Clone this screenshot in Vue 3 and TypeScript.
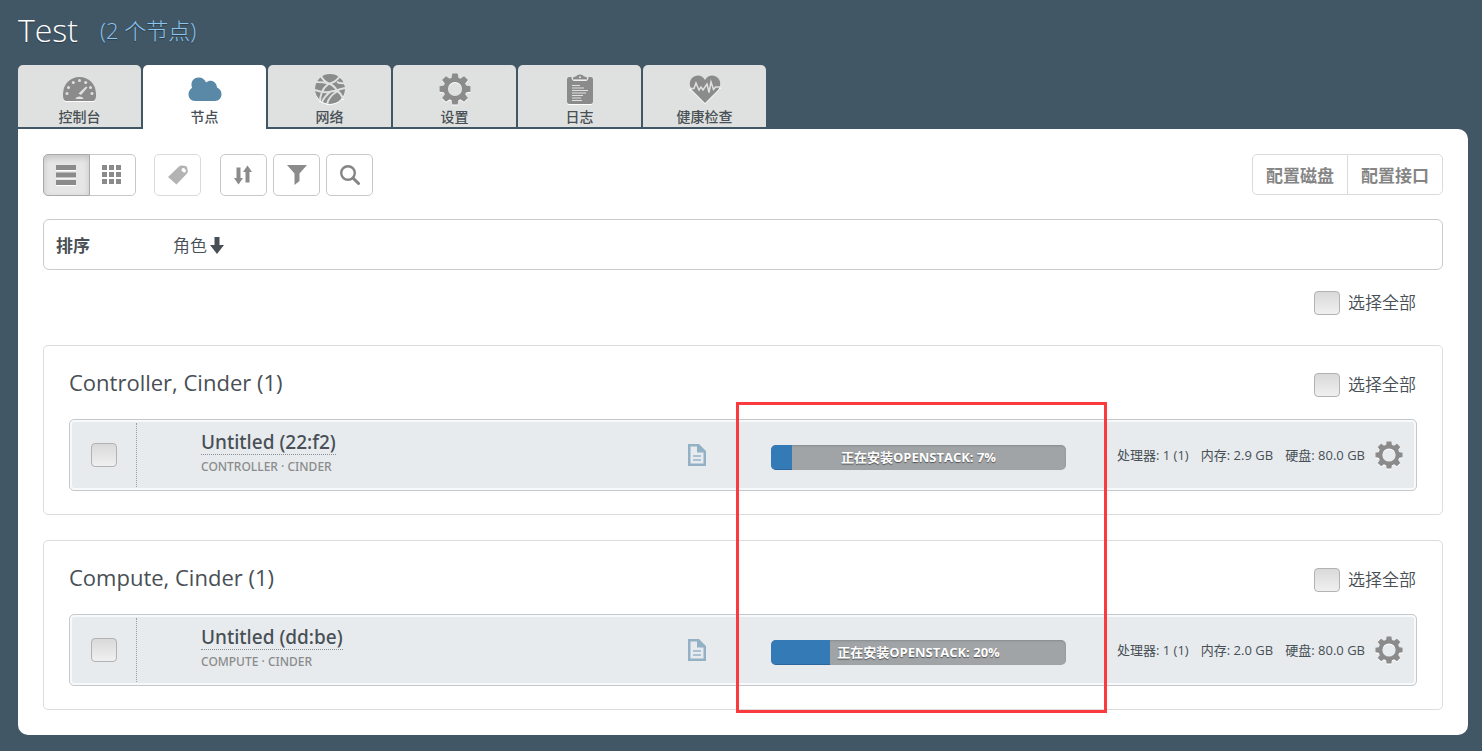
<script setup lang="ts">
import { ref } from 'vue'

interface Tab {
  id: string
  label: string
}

interface NodeItem {
  name: string
  roles: string
  progress: number
  ram: string
}

interface NodeGroup {
  title: string
  nodes: NodeItem[]
}

const tabs: Tab[] = [
  { id: 'dashboard', label: '控制台' },
  { id: 'nodes', label: '节点' },
  { id: 'network', label: '网络' },
  { id: 'settings', label: '设置' },
  { id: 'logs', label: '日志' },
  { id: 'health', label: '健康检查' },
]

const activeTab = ref('nodes')
const viewMode = ref<'list' | 'grid'>('list')

const groups: NodeGroup[] = [
  {
    title: 'Controller, Cinder (1)',
    nodes: [{ name: 'Untitled (22:f2)', roles: 'CONTROLLER · CINDER', progress: 7, ram: '2.9 GB' }],
  },
  {
    title: 'Compute, Cinder (1)',
    nodes: [{ name: 'Untitled (dd:be)', roles: 'COMPUTE · CINDER', progress: 20, ram: '2.0 GB' }],
  },
]

const toothAngles = [0, 45, 90, 135, 180, 225, 270, 315]
const gridOffsets = [0, 7, 14]
</script>

<template>
  <div class="page">
    <header class="page-header">
      <h1>Test</h1>
      <span class="node-count">(2 个节点)</span>
    </header>

    <nav class="tabs">
      <a
        v-for="tab in tabs"
        :key="tab.id"
        :href="'#' + tab.id"
        class="tab"
        :class="{ active: tab.id === activeTab }"
        @click.prevent="activeTab = tab.id"
      >
        <span class="tab-icon">
          <svg v-if="tab.id === 'dashboard'" width="33" height="24" viewBox="0 0 33 24">
            <path class="fill" d="M3.5 24Q0 24 0 19V16.500A16.500 16.500 0 0 1 33 16.500V19Q33 24 29.500 24Z" />
            <g class="hole">
              <circle cx="4" cy="16.500" r="1.500" />
              <circle cx="5.500" cy="10.500" r="1.500" />
              <circle cx="10.300" cy="5.500" r="1.500" />
              <circle cx="16.500" cy="3.500" r="1.500" />
              <circle cx="22.700" cy="5.500" r="1.500" />
              <circle cx="27.500" cy="10.500" r="1.500" />
              <circle cx="29" cy="16.500" r="1.500" />
              <path d="M15.500 16.500L23 9.500L24.500 10.500L18 18Z" />
              <path d="M12.500 22Q13 19.500 16.500 19.500T20.500 22Z" />
            </g>
          </svg>
          <svg v-else-if="tab.id === 'nodes'" width="34" height="24" viewBox="0 0 34 24">
            <path
              class="fill"
              d="M7 24C3 24 0.500 21 0.500 17.500C0.500 14 2.500 11.500 4 11C2 5 5.500 0.500 10.500 0.500C14.500 0.500 17 2.500 18 5.500C22 2 28.500 4 29 10.500C31.500 11.500 33.500 14 33.500 17C33.500 21 31 24 27 24Z"
            />
          </svg>
          <svg v-else-if="tab.id === 'network'" width="30" height="30" viewBox="0 0 30 30">
            <circle class="fill" cx="15" cy="15" r="15" />
            <path
              class="line"
              d="M6 2Q9 8 14 9.500M25 2Q21 8 15 9.500M1 8Q8 8 14 9.500M14 9.500Q9 13 7 18T5 27M14 9.500Q20 12 22 17Q26 19 28 25M22 8Q26 10 30 9M0 16Q8 19 14 18T30 14M12 30Q14 22 22 17.500M7 28Q9 23 15 18"
            />
          </svg>
          <svg v-else-if="tab.id === 'settings'" width="32" height="32" viewBox="-16 -16 32 32">
            <circle class="ring" r="9.300" />
            <path
              v-for="angle in toothAngles"
              :key="angle"
              class="fill"
              d="M-3.500 -10.500L-2.700 -15.500H2.700L3.500 -10.500Z"
              :transform="`rotate(${angle})`"
            />
          </svg>
          <svg v-else-if="tab.id === 'logs'" width="26" height="30" viewBox="0 0 26 30">
            <path
              class="fill"
              d="M2.500 3H4.500Q4.500 7 7.500 7H18.500Q21.500 7 21.500 3H23.500Q26 3 26 5.500V27.500Q26 30 23.500 30H2.500Q0 30 0 27.500V5.500Q0 3 2.500 3ZM6 5.500Q5.500 2.500 9 2.500Q10 0.500 13 0.500T17 2.500Q20.500 2.500 20 5.500Z"
            />
            <circle class="hole" cx="13" cy="3.200" r="1" />
            <path class="thin" d="M5 11.500H13M5 14H17M5 16.500H21M5 19H19M5 21.500H16M5 24H14M5 26.500H15" />
          </svg>
          <svg v-else width="32" height="28" viewBox="0 0 32 28">
            <path
              class="fill"
              d="M16 28L3 15C0 11.500 0 6 3 3C6.500-0.500 13-0.500 16 5C19-0.500 25.500-0.500 29 3C32 6 32 11.500 29 15Z"
            />
            <path class="pulse" d="M0 13.500H5L7 8L10 15L12 12L14 15L18 9L20 17.500L22 7L24.500 14.500L26.500 12H32" />
          </svg>
        </span>
        <span class="tab-label">{{ tab.label }}</span>
      </a>
    </nav>

    <main class="panel">
      <div class="toolbar">
        <div class="btn-group">
          <button
            class="btn icon-btn"
            :class="{ pressed: viewMode === 'list' }"
            type="button"
            aria-label="列表"
            @click="viewMode = 'list'"
          >
            <svg width="20" height="20" viewBox="0 0 20 20"><path class="fill" d="M0 0H20V5H0ZM0 7.500H20V12.500H0ZM0 15H20V20H0Z" /></svg>
          </button>
          <button
            class="btn icon-btn"
            :class="{ pressed: viewMode === 'grid' }"
            type="button"
            aria-label="网格"
            @click="viewMode = 'grid'"
          >
            <svg width="20" height="20" viewBox="0 0 20 20">
              <template v-for="y in gridOffsets" :key="y">
                <rect v-for="x in gridOffsets" :key="x" class="fill" :x="x" :y="y" width="5" height="5" />
              </template>
            </svg>
          </button>
        </div>
        <button class="btn icon-btn tag-btn" type="button" aria-label="标签" disabled>
          <svg width="22" height="22" viewBox="0 0 22 22">
            <path
              class="fill"
              fill-rule="evenodd"
              d="M1 13L12 2.500Q13 1.500 15 1.500L18.500 2Q20 2.300 20.300 4L20.800 7Q21 8.500 20 9.500L9.500 20.500ZM15 4.500A1.800 2.300 -45 0 0 18.500 8A1.800 2.300 -45 0 0 15 4.500Z"
            />
          </svg>
        </button>
        <div class="tool-set">
          <button class="btn icon-btn" type="button" aria-label="排序">
            <svg width="19" height="20" viewBox="0 0 19 20">
              <path class="fill" d="M2.500 2.500H6.500V13H9L4.500 19.500L0 13H2.500ZM11.500 17.500V7H9L13.500 0.500L18 7H15.500V17.500Z" />
            </svg>
          </button>
          <button class="btn icon-btn" type="button" aria-label="筛选">
            <svg width="20" height="20" viewBox="0 0 20 20"><path class="fill" d="M0 0H20L12.500 8.500V16L7.500 20V8.500Z" /></svg>
          </button>
          <button class="btn icon-btn" type="button" aria-label="搜索">
            <svg width="20" height="20" viewBox="0 0 20 20">
              <circle class="lens" cx="8" cy="8" r="6.800" />
              <path class="handle" d="M13 13L18.500 18.500" />
            </svg>
          </button>
        </div>
        <div class="btn-group actions">
          <button class="btn text-btn" type="button">配置磁盘</button>
          <button class="btn text-btn" type="button">配置接口</button>
        </div>
      </div>

      <div class="sort-bar">
        <strong>排序</strong>
        <button class="sort-key" type="button">
          角色
          <svg width="14" height="17" viewBox="0 0 14 17"><path d="M4.500 0H9.500V8H14L7 17L0 8H4.500Z" /></svg>
        </button>
      </div>

      <div class="select-row">
        <label class="select-all"><input type="checkbox" />选择全部</label>
      </div>

      <div class="groups">
        <section v-for="group in groups" :key="group.title" class="group">
          <div class="group-head">
            <h2>{{ group.title }}</h2>
            <label class="select-all"><input type="checkbox" />选择全部</label>
          </div>
          <div v-for="node in group.nodes" :key="node.name" class="node">
            <label class="node-check"><input type="checkbox" :aria-label="node.name" /></label>
            <div class="node-title">
              <a href="#node" class="node-name" @click.prevent>{{ node.name }}</a>
              <div class="node-roles">{{ node.roles }}</div>
            </div>
            <a href="#logs" class="node-log" aria-label="日志" @click.prevent>
              <svg width="18" height="22" viewBox="0 0 18 22">
                <path fill-rule="evenodd" d="M0 0H11L18 7V22H0ZM2.500 2.500V19.500H15.500V8.500H9V2.500Z" />
                <path class="doc-lines" d="M5 12H13M5 16H13" />
              </svg>
            </a>
            <div
              class="progress"
              role="progressbar"
              :aria-valuenow="node.progress"
              aria-valuemin="0"
              aria-valuemax="100"
            >
              <div class="progress-bar" :style="{ width: node.progress + '%' }"></div>
              <div class="progress-text">正在安装OPENSTACK: {{ node.progress }}%</div>
            </div>
            <div class="specs">
              <span>处理器: 1 (1)</span>
              <span>内存: {{ node.ram }}</span>
              <span>硬盘: 80.0 GB</span>
            </div>
            <button class="node-settings" type="button" aria-label="设置">
              <svg width="28" height="28" viewBox="-16 -16 32 32">
                <circle class="ring" r="9.800" />
                <path
                  v-for="angle in toothAngles"
                  :key="angle"
                  class="fill"
                  d="M-3.500 -10.500L-2.700 -15.500H2.700L3.500 -10.500Z"
                  :transform="`rotate(${angle})`"
                />
              </svg>
            </button>
          </div>
        </section>
        <div class="highlight"></div>
      </div>
    </main>
  </div>
</template>

<style>
body {
  background: #415766;
}
</style>

<style scoped>
.page {
  box-sizing: border-box;
  padding: 0 14px 16px 18px;
  font-family: 'Open Sans', 'Noto Sans CJK SC', sans-serif;
  font-size: 17px;
  line-height: 24px;
  color: #484f55;
}

.page * {
  box-sizing: border-box;
}

svg {
  display: block;
}

button {
  font: inherit;
  color: inherit;
  cursor: pointer;
}

.page-header {
  display: flex;
  align-items: center;
  gap: 22px;
  height: 65px;
  padding-bottom: 5px;
  font-weight: 300;
  text-shadow: 0 1px 1px rgba(0, 0, 0, 0.3);
}

h1 {
  margin: 0;
  font-size: 32px;
  line-height: 44px;
  font-weight: 300;
  color: #fff;
}

.node-count {
  font-size: 22px;
  line-height: 32px;
  color: #8ac4f0;
}

.tabs {
  display: flex;
  gap: 2px;
}

.tab {
  display: flex;
  flex-direction: column;
  align-items: center;
  width: 123px;
  height: 62px;
  margin-bottom: 2px;
  border-radius: 5px 5px 0 0;
  background: #dfe1e0;
  color: #484f55;
  text-decoration: none;
}

.tab.active {
  height: 64px;
  margin-bottom: 0;
  background: #fff;
}

.tab-icon {
  display: flex;
  align-items: center;
  justify-content: center;
  height: 42px;
  padding-top: 5px;
}

.tab-icon svg,
.btn svg,
.node-settings svg {
  filter: drop-shadow(0 1px 0 #fff);
}

.tab-label {
  font-size: 14px;
  line-height: 20px;
  font-weight: 500;
}

.fill {
  fill: #8b8b8b;
}

.active .fill {
  fill: #5a89a8;
}

.hole {
  fill: #dfe1e0;
}

.line {
  fill: none;
  stroke: #dfe1e0;
  stroke-width: 2;
}

.thin {
  stroke: #dfe1e0;
  stroke-width: 1;
}

.pulse {
  fill: none;
  stroke: #dfe1e0;
  stroke-width: 1.5;
}

.ring {
  fill: none;
  stroke: #8b8b8b;
  stroke-width: 4.5;
}

.panel {
  padding: 25px;
  border-radius: 0 10px 10px 10px;
  background: #fff;
}

.toolbar {
  display: flex;
  height: 42px;
}

.btn-group,
.tool-set {
  display: flex;
}

.tool-set {
  gap: 6px;
  margin-left: 19px;
}

.btn {
  display: flex;
  align-items: center;
  justify-content: center;
  padding: 0;
  border: 1px solid #c6c8c9;
  border-radius: 5px;
  background: #fff;
}

.icon-btn {
  width: 47px;
  height: 42px;
}

.btn-group .icon-btn {
  padding-right: 1px;
}

.btn-group .btn:first-child {
  border-top-right-radius: 0;
  border-bottom-right-radius: 0;
}

.btn-group .btn:last-child {
  margin-left: -1px;
  border-top-left-radius: 0;
  border-bottom-left-radius: 0;
}

.pressed {
  z-index: 1;
  border-color: #aaa;
  background: #e6e6e6;
  box-shadow: inset 0 3px 6px rgba(0, 0, 0, 0.15);
}

.tag-btn {
  margin-left: 18px;
  opacity: 0.65;
}

.lens {
  fill: none;
  stroke: #858585;
  stroke-width: 2.4;
}

.handle {
  stroke: #858585;
  stroke-width: 3;
  stroke-linecap: round;
}

.actions {
  margin-left: auto;
}

.text-btn {
  height: 41px;
  padding: 2px 13px 0;
  border-color: #dadbdc;
  font-weight: 700;
  color: #858585;
}

.sort-bar {
  display: flex;
  align-items: center;
  height: 51px;
  margin-top: 23px;
  padding: 2px 12px 0;
  border: 1px solid #c9cbcc;
  border-radius: 6px;
}

.sort-bar strong {
  width: 117px;
}

.sort-key {
  display: flex;
  align-items: center;
  gap: 3px;
  padding: 0;
  border: 0;
  background: none;
  font-weight: 350;
}

.sort-key svg {
  fill: #484f55;
}

.select-row {
  display: flex;
  justify-content: flex-end;
  margin-top: 21px;
  padding-right: 26px;
}

.select-all {
  display: flex;
  align-items: center;
  gap: 8px;
  padding-right: 1px;
  font-weight: 350;
}

input[type='checkbox'] {
  appearance: none;
  width: 26px;
  height: 24px;
  margin: 0;
  border: 1px solid #b2b2b2;
  border-radius: 4px;
  background: linear-gradient(#d9d9d9, #f0f0f0);
}

.groups {
  position: relative;
  display: flex;
  flex-direction: column;
  gap: 25px;
  margin-top: 30px;
}

.group {
  padding: 25px 25px 23px;
  border: 1px solid #dcdddd;
  border-radius: 5px;
}

.group-head {
  display: flex;
  align-items: center;
  justify-content: space-between;
  height: 28px;
  margin-bottom: 20px;
}

h2 {
  margin: 0;
  padding-bottom: 6px;
  font-size: 22px;
  line-height: 28px;
  font-weight: 400;
}

.node {
  display: flex;
  align-items: center;
  height: 72px;
  padding: 3px 13px 3px 3px;
  border: 1px solid #c5c9cb;
  border-radius: 5px;
  background: #e7ebee;
  box-shadow: inset 0 0 0 2px #f8f9fa;
}

.node-check {
  display: flex;
  align-items: center;
  align-self: stretch;
  width: 64px;
  padding-left: 18px;
  border-right: 1px dotted #9a9fa3;
}

.node-title {
  flex: 1;
  align-self: stretch;
  padding: 7px 0 0 64px;
  font-family: 'Noto Sans', sans-serif;
  font-weight: 500;
}

.node-name {
  display: inline-block;
  border-bottom: 1px dotted #8b9094;
  font-size: 19px;
  line-height: 24px;
  color: #484f55;
  text-decoration: none;
}

.node-roles {
  margin-top: 3px;
  font-size: 12px;
  line-height: 18px;
  color: #8b8b8b;
}

.node-log {
  margin-right: 65px;
  fill: #93b1c5;
}

.doc-lines {
  stroke: #a9c1d0;
  stroke-width: 2;
}

.progress {
  display: grid;
  width: 295px;
  height: 25px;
  margin-top: 5px;
  border-radius: 5px;
  overflow: hidden;
  background: #a1a4a7;
  box-shadow: inset 0 1px 2px rgba(0, 0, 0, 0.15);
}

.progress-bar,
.progress-text {
  grid-area: 1 / 1;
}

.progress-bar {
  background: #337ab7;
  box-shadow: inset 0 -1px 0 rgba(0, 0, 0, 0.15);
}

.progress-text {
  font-size: 13px;
  line-height: 25px;
  font-weight: 700;
  text-align: center;
  color: #fff;
  text-shadow: 0 1px 1px rgba(0, 0, 0, 0.5);
}

.specs {
  display: flex;
  justify-content: space-between;
  width: 248px;
  margin: 0 10px 0 51px;
  font-size: 13px;
  white-space: nowrap;
}

.node-settings {
  padding: 0;
  border: 0;
  background: none;
}

.highlight {
  position: absolute;
  top: 57px;
  right: 336px;
  bottom: -3px;
  width: 371px;
  border: 3px solid #fa3a3c;
  pointer-events: none;
}
</style>
